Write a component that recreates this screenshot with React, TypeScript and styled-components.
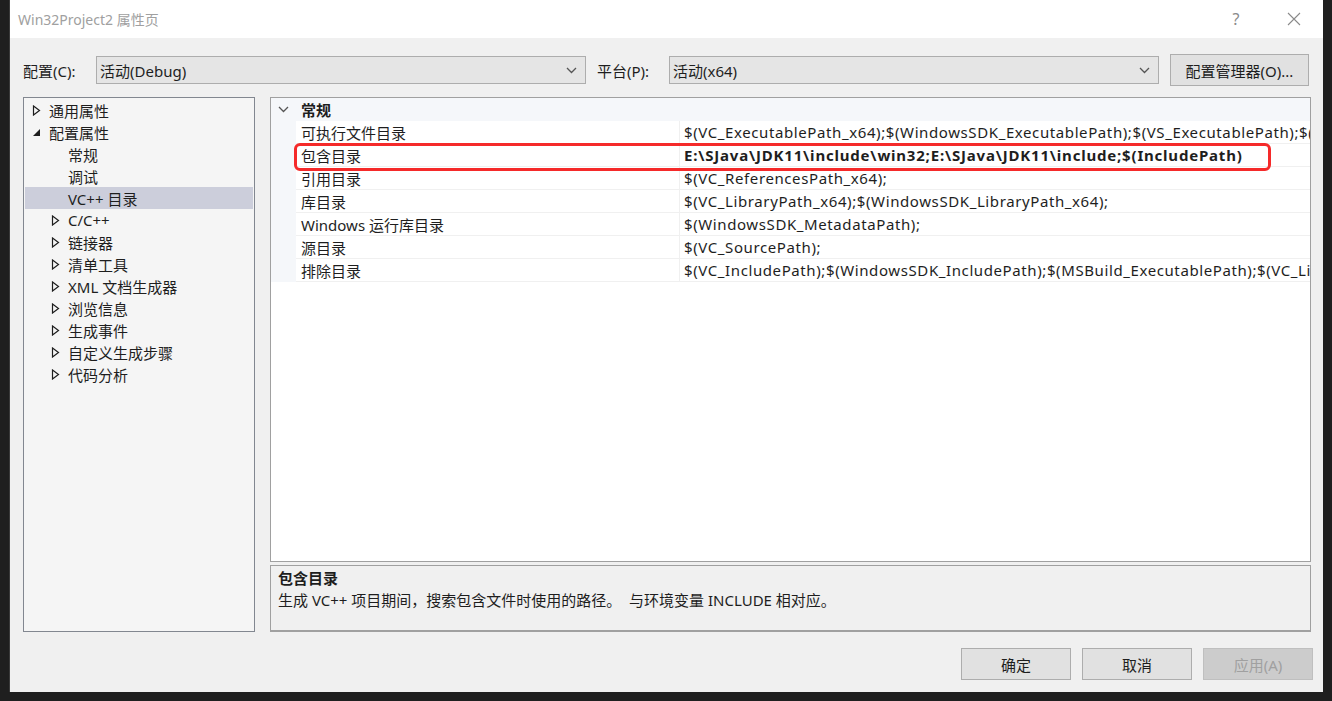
import React from "react";
import styled, { createGlobalStyle } from "styled-components";

const GlobalStyle = createGlobalStyle`
  html, body {
    margin: 0;
    padding: 0;
    background: #1f1f1f;
  }
  body {
    font-family: "Noto Sans", "Noto Sans CJK SC", sans-serif;
    font-size: 15px;
    color: #1e1e1e;
  }
`;

const Screen = styled.div`
  width: 1332px;
  height: 701px;
  box-sizing: border-box;
  padding: 0 9px 9px 9px;
  background: #1f1f1f;
  display: flex;
  overflow: hidden;
`;

const Dialog = styled.div`
  flex: 1;
  min-width: 0;
  display: flex;
  flex-direction: column;
  background: #f0f0f0;
  border-left: 1px solid #3a3a3a;
`;

const TitleBar = styled.div`
  height: 38px;
  flex-shrink: 0;
  background: #ffffff;
  display: flex;
  align-items: center;
  padding-left: 8px;
`;

const TitleText = styled.span`
  flex: 1;
  color: #a0a0a0;
  font-size: 14px;
`;

const TitleButton = styled.span`
  width: 58px;
  display: flex;
  justify-content: center;
  align-items: center;
  color: #8a8a8a;
  font-size: 16px;
`;

const Body = styled.div`
  flex: 1;
  display: flex;
  flex-direction: column;
  padding: 16px 9px 12px 13px;
  min-height: 0;
  min-width: 0;
`;

const ConfigRow = styled.div`
  display: flex;
  align-items: center;
  height: 32px;
  margin-right: 5px;
`;

const Label = styled.span<{ $width: number }>`
  width: ${(p) => p.$width}px;
  flex-shrink: 0;
`;

const Select = styled.div<{ $width: number }>`
  width: ${(p) => p.$width}px;
  flex-shrink: 0;
  height: 28px;
  box-sizing: border-box;
  background: #e5e5e5;
  border: 1px solid #adadad;
  display: flex;
  align-items: center;
  padding: 0 8px 0 3px;
  margin-right: 11px;
`;

const SelectText = styled.span`
  flex: 1;
`;

const Button = styled.div<{ $disabled?: boolean; $width?: number }>`
  width: ${(p) => p.$width ?? 110}px;
  flex-shrink: 0;
  height: 32px;
  box-sizing: border-box;
  display: flex;
  align-items: center;
  justify-content: center;
  background: ${(p) => (p.$disabled ? "#cccccc" : "#e1e1e1")};
  border: 1px solid ${(p) => (p.$disabled ? "#bfbfbf" : "#adadad")};
  color: ${(p) => (p.$disabled ? "#a0a0a0" : "#1e1e1e")};
`;

const Main = styled.div`
  display: flex;
  gap: 15px;
  margin-top: 11px;
  height: 535px;
  margin-right: 3px;
  min-width: 0;
`;

const Tree = styled.div`
  width: 232px;
  flex-shrink: 0;
  box-sizing: border-box;
  background: #f5f5f5;
  border: 1px solid #828790;
  padding-top: 1px;
`;

const TreeRow = styled.div<{ $level: number; $selected?: boolean }>`
  height: 22px;
  display: flex;
  align-items: center;
  padding-left: ${(p) => (p.$level === 0 ? 7 : 26)}px;
  background: ${(p) => (p.$selected ? "#cccedb" : "transparent")};
  margin: 0 1px;
`;

const Expander = styled.span`
  width: 17px;
  display: flex;
  align-items: center;
  flex-shrink: 0;
`;

const RightColumn = styled.div`
  flex: 1;
  min-width: 0;
  display: flex;
  flex-direction: column;
  gap: 3px;
`;

const Grid = styled.div`
  position: relative;
  flex: 1;
  background: #ffffff;
  border: 1px solid #a0a0a0;
  overflow: hidden;
`;

const CategoryRow = styled.div`
  height: 23px;
  display: flex;
  align-items: center;
  background: #f5f7fa;
  font-weight: bold;
`;

const Gutter = styled.span`
  width: 25px;
  flex-shrink: 0;
  align-self: stretch;
  display: flex;
  align-items: center;
  justify-content: center;
  background: #f5f7fa;
`;

const CategoryName = styled.span`
  padding-left: 5px;
`;

const PropRow = styled.div`
  height: 23px;
  display: flex;
  align-items: stretch;
`;

const PropName = styled.div`
  width: 384px;
  flex-shrink: 0;
  display: flex;
  align-items: center;
  padding-left: 5px;
  box-sizing: border-box;
  border-bottom: 1px solid #f0f0f0;
  border-right: 1px solid #f0f0f0;
`;

const PropValue = styled.div<{ $bold?: boolean }>`
  flex: 1;
  min-width: 0;
  display: flex;
  align-items: center;
  padding-left: 4px;
  border-bottom: 1px solid #f0f0f0;
  white-space: nowrap;
  overflow: hidden;
  letter-spacing: ${(p) => (p.$bold ? 0.8 : 0.6)}px;
  font-weight: ${(p) => (p.$bold ? "bold" : "normal")};
`;

const Highlight = styled.div`
  position: absolute;
  left: 23px;
  top: 45px;
  width: 977px;
  height: 28px;
  box-sizing: border-box;
  border: 3px solid #f52a2a;
  border-radius: 6px;
  pointer-events: none;
`;

const Description = styled.div`
  height: 67px;
  box-sizing: border-box;
  background: #f0f0f0;
  border: 1px solid #a0a0a0;
  border-bottom: 2px solid #a0a0a0;
  padding: 1px 7px;
  display: flex;
  flex-direction: column;
  gap: 1px;
`;

const DescTitle = styled.span`
  font-weight: bold;
`;

const Footer = styled.div`
  display: flex;
  justify-content: flex-end;
  gap: 11px;
  margin-top: 16px;
  margin-right: 1px;
`;

const Collapsed = () => (
  <svg width="9" height="11" viewBox="0 0 9 11">
    <path d="M1.5 1 L7.5 5.5 L1.5 10 Z" fill="none" stroke="#1e1e1e" strokeWidth="1.2" />
  </svg>
);

const Expanded = () => (
  <svg width="9" height="9" viewBox="0 0 9 9">
    <path d="M8 1 L8 8 L1 8 Z" fill="#1e1e1e" />
  </svg>
);

const Chevron = ({ color = "#555" }: { color?: string }) => (
  <svg width="11" height="7" viewBox="0 0 11 7">
    <path d="M1 1 L5.5 5.5 L10 1" fill="none" stroke={color} strokeWidth="1.3" />
  </svg>
);

const CloseIcon = () => (
  <svg width="14" height="14" viewBox="0 0 14 14">
    <path d="M1 1 L13 13 M13 1 L1 13" stroke="#8a8a8a" strokeWidth="1.1" />
  </svg>
);

type TreeItem = { label: string; level: number; state?: "collapsed" | "expanded"; selected?: boolean };

const treeItems: TreeItem[] = [
  { label: "通用属性", level: 0, state: "collapsed" },
  { label: "配置属性", level: 0, state: "expanded" },
  { label: "常规", level: 1 },
  { label: "调试", level: 1 },
  { label: "VC++ 目录", level: 1, selected: true },
  { label: "C/C++", level: 1, state: "collapsed" },
  { label: "链接器", level: 1, state: "collapsed" },
  { label: "清单工具", level: 1, state: "collapsed" },
  { label: "XML 文档生成器", level: 1, state: "collapsed" },
  { label: "浏览信息", level: 1, state: "collapsed" },
  { label: "生成事件", level: 1, state: "collapsed" },
  { label: "自定义生成步骤", level: 1, state: "collapsed" },
  { label: "代码分析", level: 1, state: "collapsed" },
];

const props: { name: string; value: string; bold?: boolean }[] = [
  {
    name: "可执行文件目录",
    value: "$(VC_ExecutablePath_x64);$(WindowsSDK_ExecutablePath);$(VS_ExecutablePath);$(MSBuild_ExecutablePath);$(FxCopDir);$(PATH);",
  },
  {
    name: "包含目录",
    value: "E:\\SJava\\JDK11\\include\\win32;E:\\SJava\\JDK11\\include;$(IncludePath)",
    bold: true,
  },
  { name: "引用目录", value: "$(VC_ReferencesPath_x64);" },
  { name: "库目录", value: "$(VC_LibraryPath_x64);$(WindowsSDK_LibraryPath_x64);" },
  { name: "Windows 运行库目录", value: "$(WindowsSDK_MetadataPath);" },
  { name: "源目录", value: "$(VC_SourcePath);" },
  {
    name: "排除目录",
    value: "$(VC_IncludePath);$(WindowsSDK_IncludePath);$(MSBuild_ExecutablePath);$(VC_LibraryPath_x64);",
  },
];

export default function App() {
  return (
    <>
      <GlobalStyle />
      <Screen>
        <Dialog>
          <TitleBar>
            <TitleText>Win32Project2 属性页</TitleText>
            <TitleButton>?</TitleButton>
            <TitleButton>
              <CloseIcon />
            </TitleButton>
          </TitleBar>
          <Body>
            <ConfigRow>
              <Label $width={73}>配置(C):</Label>
              <Select $width={490}>
                <SelectText>活动(Debug)</SelectText>
                <Chevron />
              </Select>
              <Label $width={72}>平台(P):</Label>
              <Select $width={490}>
                <SelectText>活动(x64)</SelectText>
                <Chevron />
              </Select>
              <Button $width={139}>配置管理器(O)...</Button>
            </ConfigRow>
            <Main>
              <Tree>
                {treeItems.map((item) => (
                  <TreeRow key={item.label} $level={item.level} $selected={item.selected}>
                    <Expander>
                      {item.state === "collapsed" && <Collapsed />}
                      {item.state === "expanded" && <Expanded />}
                    </Expander>
                    <span>{item.label}</span>
                  </TreeRow>
                ))}
              </Tree>
              <RightColumn>
                <Grid>
                  <CategoryRow>
                    <Gutter>
                      <Chevron color="#555" />
                    </Gutter>
                    <CategoryName>常规</CategoryName>
                  </CategoryRow>
                  {props.map((p) => (
                    <PropRow key={p.name}>
                      <Gutter />
                      <PropName>{p.name}</PropName>
                      <PropValue $bold={p.bold}>{p.value}</PropValue>
                    </PropRow>
                  ))}
                  <Highlight />
                </Grid>
                <Description>
                  <DescTitle>包含目录</DescTitle>
                  <span>生成 VC++ 项目期间，搜索包含文件时使用的路径。{"\u00a0 "}与环境变量 INCLUDE 相对应。</span>
                </Description>
              </RightColumn>
            </Main>
            <Footer>
              <Button>确定</Button>
              <Button>取消</Button>
              <Button $disabled>应用(A)</Button>
            </Footer>
          </Body>
        </Dialog>
      </Screen>
    </>
  );
}
